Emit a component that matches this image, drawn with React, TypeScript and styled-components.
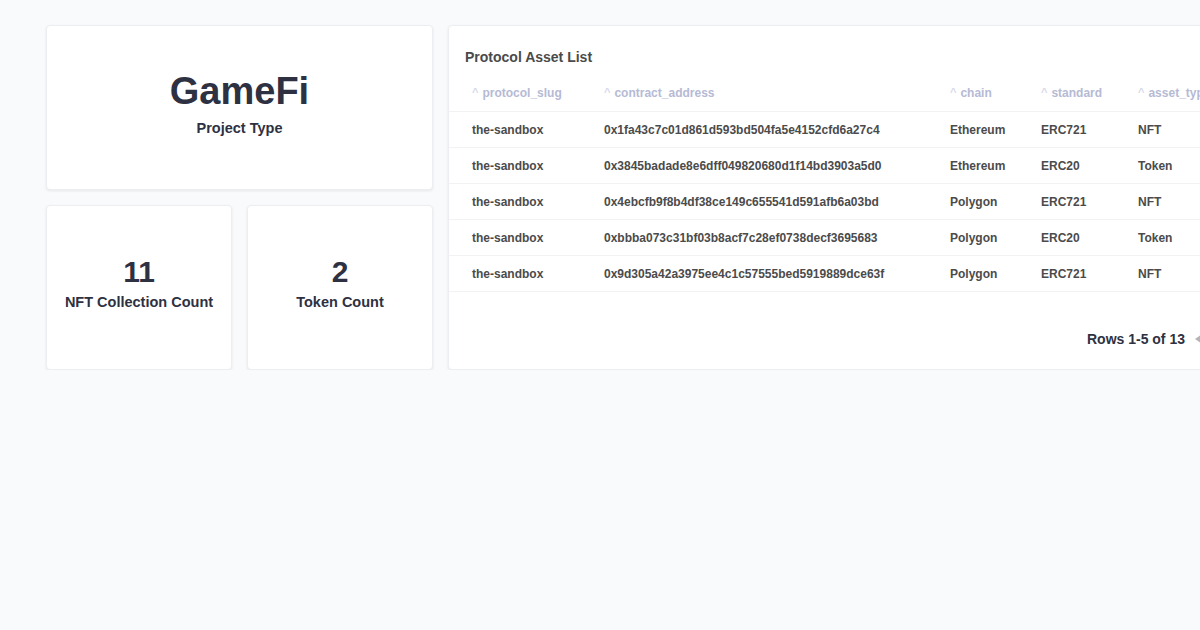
import styled, { createGlobalStyle } from "styled-components";

type asset = {
  slug: string;
  address: string;
  chain: string;
  standard: string;
  type: string;
};

const assets: asset[] = [
  { slug: "the-sandbox", address: "0x1fa43c7c01d861d593bd504fa5e4152cfd6a27c4", chain: "Ethereum", standard: "ERC721", type: "NFT" },
  { slug: "the-sandbox", address: "0x3845badade8e6dff049820680d1f14bd3903a5d0", chain: "Ethereum", standard: "ERC20", type: "Token" },
  { slug: "the-sandbox", address: "0x4ebcfb9f8b4df38ce149c655541d591afb6a03bd", chain: "Polygon", standard: "ERC721", type: "NFT" },
  { slug: "the-sandbox", address: "0xbbba073c31bf03b8acf7c28ef0738decf3695683", chain: "Polygon", standard: "ERC20", type: "Token" },
  { slug: "the-sandbox", address: "0x9d305a42a3975ee4c1c57555bed5919889dce63f", chain: "Polygon", standard: "ERC721", type: "NFT" },
];

const columns = [
  { key: "protocol_slug", width: 132 },
  { key: "contract_address", width: 346 },
  { key: "chain", width: 91 },
  { key: "standard", width: 97 },
  { key: "asset_type", width: 133 },
];

const GlobalStyle = createGlobalStyle`
  html, body {
    margin: 0;
    overflow: hidden;
    background: #f9fafb;
    font-family: "Liberation Sans", Arial, sans-serif;
  }
`;

const Page = styled.div`
  display: grid;
  grid-template-columns: 186px 186px 800px;
  grid-template-rows: 165px 165px;
  gap: 15px;
  padding: 25px 0 0 46px;
  width: max-content;
`;

const Card = styled.div<{ wide?: boolean }>`
  grid-column: ${(p) => (p.wide ? "1 / 3" : "auto")};
  display: flex;
  flex-direction: column;
  align-items: center;
  justify-content: center;
  padding-bottom: ${(p) => (p.wide ? 8 : 9)}px;
  background: #ffffff;
  border: 1px solid #eceef1;
  border-radius: 4px;
  box-shadow: 0 1px 3px rgba(0, 0, 0, 0.08);
  color: #2e3142;
`;

const BigValue = styled.div<{ size: number }>`
  font-size: ${(p) => p.size}px;
  font-weight: bold;
  line-height: 1.15;
`;

const Label = styled.div<{ gap: number }>`
  font-size: 14.5px;
  line-height: 17px;
  font-weight: bold;
  margin-top: ${(p) => p.gap}px;
`;

const Panel = styled.div`
  grid-column: 3;
  grid-row: 1 / 3;
  display: flex;
  flex-direction: column;
  background: #ffffff;
  border: 1px solid #eceef1;
  border-radius: 4px;
  box-shadow: 0 1px 3px rgba(0, 0, 0, 0.08);
`;

const Title = styled.div`
  padding: 23px 16px 10px;
  font-size: 14px;
  line-height: 16px;
  font-weight: bold;
  color: #4a4a4a;
`;

const Table = styled.table`
  border-collapse: collapse;
  table-layout: fixed;
  width: 799px;
  font-size: 12px;
  font-weight: bold;
`;

const Th = styled.th`
  height: 36px;
  padding: 0 0 0 23px;
  text-align: left;
  color: #b6bad5;
  border-bottom: 1px solid #f1f2f4;
  white-space: nowrap;
  overflow: hidden;
`;

const Caret = styled.span`
  color: #d8dae7;
  margin-right: 4px;
  font-size: 11px;
  vertical-align: 1px;
`;

const Td = styled.td`
  height: 35px;
  padding: 0 0 0 23px;
  color: #4b4b4b;
  border-bottom: 1px solid #f1f2f4;
  white-space: nowrap;
`;

const Footer = styled.div`
  display: flex;
  align-items: center;
  justify-content: flex-end;
  gap: 8px;
  padding: 37px 26px 20px;
`;

const RowCount = styled.div`
  font-size: 14px;
  line-height: 20px;
  font-weight: bold;
  color: #2e3142;
`;

const PageButton = styled.button<{ disabled?: boolean }>`
  display: flex;
  align-items: center;
  justify-content: center;
  width: 10px;
  height: 20px;
  padding: 0;
  border: none;
  background: none;
  color: ${(p) => (p.disabled ? "#b5b5b5" : "#4b4b4b")};
`;

const Triangle = ({ left }: { left?: boolean }) => (
  <svg width="7" height="10" viewBox="0 0 7 10">
    <path d={left ? "M7 0 L0 5 L7 10 Z" : "M0 0 L7 5 L0 10 Z"} fill="currentColor" />
  </svg>
);

export default function App() {
  return (
    <>
      <GlobalStyle />
      <Page>
        <Card wide>
          <BigValue size={38}>GameFi</BigValue>
          <Label gap={7}>Project Type</Label>
        </Card>
        <Panel>
          <Title>Protocol Asset List</Title>
          <Table>
            <colgroup>
              {columns.map((c) => (
                <col key={c.key} style={{ width: c.width }} />
              ))}
            </colgroup>
            <thead>
              <tr>
                {columns.map((c) => (
                  <Th key={c.key}>
                    <Caret>^</Caret>
                    {c.key}
                  </Th>
                ))}
              </tr>
            </thead>
            <tbody>
              {assets.map((a) => (
                <tr key={a.address}>
                  <Td>{a.slug}</Td>
                  <Td>{a.address}</Td>
                  <Td>{a.chain}</Td>
                  <Td>{a.standard}</Td>
                  <Td>{a.type}</Td>
                </tr>
              ))}
            </tbody>
          </Table>
          <Footer>
            <RowCount>Rows 1-5 of 13</RowCount>
            <PageButton disabled>
              <Triangle left />
            </PageButton>
            <PageButton>
              <Triangle />
            </PageButton>
          </Footer>
        </Panel>
        <Card>
          <BigValue size={30}>11</BigValue>
          <Label gap={4}>NFT Collection Count</Label>
        </Card>
        <Card>
          <BigValue size={30}>2</BigValue>
          <Label gap={4}>Token Count</Label>
        </Card>
      </Page>
    </>
  );
}
